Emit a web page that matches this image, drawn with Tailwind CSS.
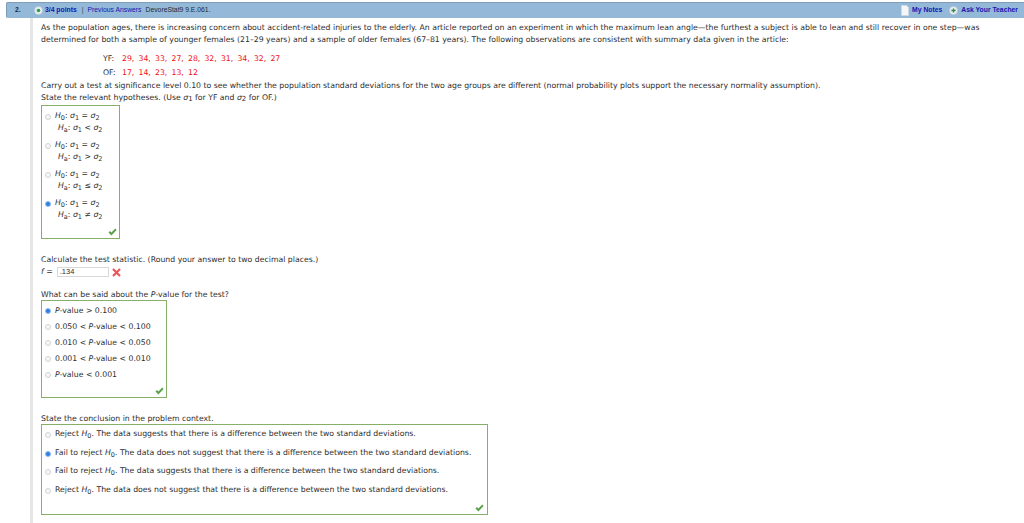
<!DOCTYPE html>
<html lang="en">
<head>
  <meta charset="UTF-8" />
  <title>DevoreStat9 9.E.061</title>
  <script src="https://cdn.jsdelivr.net/npm/@tailwindcss/browser@4"></script>
</head>
<body class="bg-white w-[1024px] h-[523px] overflow-hidden font-['DejaVu_Sans',sans-serif] text-[7.75px] text-[#2e2e2e]">

  <!-- question header -->
  <div class="mt-[2px] ml-[6px] h-[16px] bg-[#94b9d8] border-t border-l border-[#7f9db8] rounded-l-[2px] flex items-center font-['Liberation_Sans',sans-serif] text-[6.8px]">
    <span class="ml-[8px] w-[19px] font-bold text-[#1a2a3a]">2.</span>
    <svg width="9" height="9" viewBox="0 0 9 9"><circle cx="4.5" cy="4.5" r="4" fill="#e8eef2" stroke="#b9c9d4" stroke-width="0.6"/><circle cx="4.5" cy="4.5" r="1.8" fill="#2f9e44"/></svg>
    <span class="ml-[2px] font-bold text-[#1616b0]">3/4 points</span>
    <span class="ml-[5px] text-[#24405c]">|</span>
    <span class="ml-[4px] text-[#1616b0]">Previous Answers</span>
    <span class="ml-[4px] text-[#1c2a38]">DevoreStat9 9.E.061.</span>
    <svg width="8" height="11" viewBox="0 0 8 11" class="ml-auto"><path d="M0.5 0.5H5.5L7.5 2.5V10.5H0.5Z" fill="#f4f6f8" stroke="#d5dde3" stroke-width="0.5"/></svg>
    <span class="ml-[3px] font-bold text-[#1616b0]">My Notes</span>
    <svg width="9" height="9" viewBox="0 0 9 9" class="ml-[7px]"><circle cx="4.5" cy="4.5" r="4" fill="#e8eef2" stroke="#b9c9d4" stroke-width="0.6"/><path d="M4.5 2.4V6.6M2.4 4.5H6.6" stroke="#2f8a3e" stroke-width="1.3"/></svg>
    <span class="ml-[3px] mr-[6px] font-bold text-[#1616b0]">Ask Your Teacher</span>
  </div>

  <!-- question body -->
  <div class="ml-[30px] h-[505px] border-l-[3px] border-[#e6e6e6] pl-[8px] pt-[4px]">
    <p class="leading-[12px] whitespace-nowrap">As the population ages, there is increasing concern about accident-related injuries to the elderly. An article reported on an experiment in which the maximum lean angle—the furthest a subject is able to lean and still recover in one step—was<br>determined for both a sample of younger females (21–29 years) and a sample of older females (67–81 years). The following observations are consistent with summary data given in the article:</p>

    <div class="mt-[6px] ml-[62px] leading-[14px]">
      <p class="flex"><span class="w-[19px]">YF:</span><span class="text-[#f01018] [word-spacing:1.7px]">29, 34, 33, 27, 28, 32, 31, 34, 32, 27</span></p>
      <p class="flex"><span class="w-[19px]">OF:</span><span class="text-[#f01018] [word-spacing:1.7px]">17, 14, 23, 13, 12</span></p>
    </div>

    <p class="leading-[11.5px] whitespace-nowrap">Carry out a test at significance level 0.10 to see whether the population standard deviations for the two age groups are different (normal probability plots support the necessary normality assumption).<br>State the relevant hypotheses. (Use <i>σ</i><sub class="text-[7px]">1</sub> for YF and <i>σ</i><sub class="text-[7px]">2</sub> for OF.)</p>

    <!-- hypotheses -->
    <div class="relative mt-[2px] w-[79px] h-[134px] border border-[#86b068] pl-[3px] pt-[4px]">
      <div class="flex h-[29px] leading-[12px]">
        <span class="mt-[4px] w-[6px] h-[6px] shrink-0 rounded-full border border-[#d2d2d2] bg-[#f6f6f6]"></span>
        <div class="ml-[4px]"><p><i>H</i><sub class="text-[6.5px]">0</sub>: <i>σ</i><sub class="text-[6.5px]">1</sub> = <i>σ</i><sub class="text-[6.5px]">2</sub></p><p class="pl-[3px]"><i>H</i><sub class="text-[6.5px]">a</sub>: <i>σ</i><sub class="text-[6.5px]">1</sub> &lt; <i>σ</i><sub class="text-[6.5px]">2</sub></p></div>
      </div>
      <div class="flex h-[29px] leading-[12px]">
        <span class="mt-[4px] w-[6px] h-[6px] shrink-0 rounded-full border border-[#d2d2d2] bg-[#f6f6f6]"></span>
        <div class="ml-[4px]"><p><i>H</i><sub class="text-[6.5px]">0</sub>: <i>σ</i><sub class="text-[6.5px]">1</sub> = <i>σ</i><sub class="text-[6.5px]">2</sub></p><p class="pl-[3px]"><i>H</i><sub class="text-[6.5px]">a</sub>: <i>σ</i><sub class="text-[6.5px]">1</sub> &gt; <i>σ</i><sub class="text-[6.5px]">2</sub></p></div>
      </div>
      <div class="flex h-[29px] leading-[12px]">
        <span class="mt-[4px] w-[6px] h-[6px] shrink-0 rounded-full border border-[#d2d2d2] bg-[#f6f6f6]"></span>
        <div class="ml-[4px]"><p><i>H</i><sub class="text-[6.5px]">0</sub>: <i>σ</i><sub class="text-[6.5px]">1</sub> = <i>σ</i><sub class="text-[6.5px]">2</sub></p><p class="pl-[3px]"><i>H</i><sub class="text-[6.5px]">a</sub>: <i>σ</i><sub class="text-[6.5px]">1</sub> ≤ <i>σ</i><sub class="text-[6.5px]">2</sub></p></div>
      </div>
      <div class="flex h-[29px] leading-[12px]">
        <span class="mt-[4px] w-[6px] h-[6px] shrink-0 rounded-full bg-[#2f7fe0] border border-[#8fbcf0]"></span>
        <div class="ml-[4px]"><p><i>H</i><sub class="text-[6.5px]">0</sub>: <i>σ</i><sub class="text-[6.5px]">1</sub> = <i>σ</i><sub class="text-[6.5px]">2</sub></p><p class="pl-[3px]"><i>H</i><sub class="text-[6.5px]">a</sub>: <i>σ</i><sub class="text-[6.5px]">1</sub> ≠ <i>σ</i><sub class="text-[6.5px]">2</sub></p></div>
      </div>
      <svg width="9" height="8" viewBox="0 0 9 8" class="absolute right-[2px] bottom-[2px]"><path d="M0.5 4.5L2 3L3.4 4.5L7.3 0.6L8.6 2L3.4 7.4Z" fill="#5aa34a"/></svg>
    </div>

    <!-- test statistic -->
    <p class="mt-[14px] h-[12px] leading-[14px]">Calculate the test statistic. (Round your answer to two decimal places.)</p>
    <div class="flex items-center h-[12px] pt-[2px]">
      <span><i>f</i> =</span>
      <span class="ml-[4px] w-[52px] h-[10px] border border-[#d8d8d8] pl-[2px] leading-[8px] font-['Liberation_Sans',sans-serif] text-[7.5px]">.134</span>
      <svg width="9" height="9" viewBox="0 0 9 9" class="ml-[3px]"><path d="M1 1L8 8M8 1L1 8" stroke="#e8575c" stroke-width="2.2"/></svg>
    </div>

    <p class="mt-[11px] h-[12px] leading-[14px]">What can be said about the <i>P</i>-value for the test?</p>

    <!-- p-value -->
    <div class="relative w-[126px] h-[98px] border border-[#86b068] pl-[3px] pt-[2px]">
      <div class="flex items-center h-[16px]"><span class="w-[6px] h-[6px] shrink-0 rounded-full bg-[#2f7fe0] border border-[#8fbcf0]"></span><span class="ml-[4px]"><i>P</i>-value &gt; 0.100</span></div>
      <div class="flex items-center h-[16px]"><span class="w-[6px] h-[6px] shrink-0 rounded-full border border-[#d2d2d2] bg-[#f6f6f6]"></span><span class="ml-[4px]">0.050 &lt; <i>P</i>-value &lt; 0.100</span></div>
      <div class="flex items-center h-[16px]"><span class="w-[6px] h-[6px] shrink-0 rounded-full border border-[#d2d2d2] bg-[#f6f6f6]"></span><span class="ml-[4px]">0.010 &lt; <i>P</i>-value &lt; 0.050</span></div>
      <div class="flex items-center h-[16px]"><span class="w-[6px] h-[6px] shrink-0 rounded-full border border-[#d2d2d2] bg-[#f6f6f6]"></span><span class="ml-[4px]">0.001 &lt; <i>P</i>-value &lt; 0.010</span></div>
      <div class="flex items-center h-[16px]"><span class="w-[6px] h-[6px] shrink-0 rounded-full border border-[#d2d2d2] bg-[#f6f6f6]"></span><span class="ml-[4px]"><i>P</i>-value &lt; 0.001</span></div>
      <svg width="9" height="8" viewBox="0 0 9 8" class="absolute right-[2px] bottom-[2px]"><path d="M0.5 4.5L2 3L3.4 4.5L7.3 0.6L8.6 2L3.4 7.4Z" fill="#5aa34a"/></svg>
    </div>

    <!-- conclusion -->
    <p class="mt-[14px] h-[12px] leading-[14px]">State the conclusion in the problem context.</p>
    <div class="relative w-[447px] h-[91px] border border-[#86b068] pl-[3px] whitespace-nowrap">
      <div class="flex items-center h-[18.5px]"><span class="mt-[2px] w-[6px] h-[6px] shrink-0 rounded-full border border-[#d2d2d2] bg-[#f6f6f6]"></span><span class="ml-[4px]">Reject <i>H</i><sub class="text-[6.5px]">0</sub>. The data suggests that there is a difference between the two standard deviations.</span></div>
      <div class="flex items-center h-[18.5px]"><span class="mt-[2px] w-[6px] h-[6px] shrink-0 rounded-full bg-[#2f7fe0] border border-[#8fbcf0]"></span><span class="ml-[4px]">Fail to reject <i>H</i><sub class="text-[6.5px]">0</sub>. The data does not suggest that there is a difference between the two standard deviations.</span></div>
      <div class="flex items-center h-[18.5px]"><span class="mt-[2px] w-[6px] h-[6px] shrink-0 rounded-full border border-[#d2d2d2] bg-[#f6f6f6]"></span><span class="ml-[4px]">Fail to reject <i>H</i><sub class="text-[6.5px]">0</sub>. The data suggests that there is a difference between the two standard deviations.</span></div>
      <div class="flex items-center h-[18.5px]"><span class="mt-[2px] w-[6px] h-[6px] shrink-0 rounded-full border border-[#d2d2d2] bg-[#f6f6f6]"></span><span class="ml-[4px]">Reject <i>H</i><sub class="text-[6.5px]">0</sub>. The data does not suggest that there is a difference between the two standard deviations.</span></div>
      <svg width="9" height="8" viewBox="0 0 9 8" class="absolute right-[3px] bottom-[2px]"><path d="M0.5 4.5L2 3L3.4 4.5L7.3 0.6L8.6 2L3.4 7.4Z" fill="#5aa34a"/></svg>
    </div>
  </div>
</body>
</html>
